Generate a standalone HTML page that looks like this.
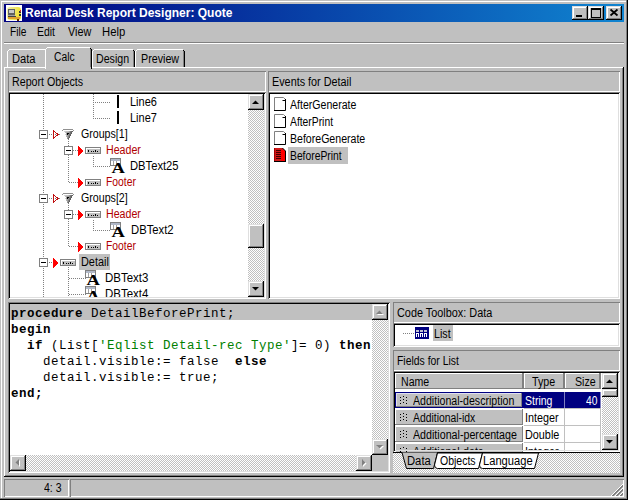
<!DOCTYPE html><html><head><meta charset="utf-8"><style>
html,body{margin:0;padding:0}
body{width:628px;height:500px;position:relative;overflow:hidden;background:#c0c0c0;font-family:"Liberation Sans",sans-serif;font-size:11px;color:#000}
.a{position:absolute}
.t{position:absolute;white-space:pre;line-height:13px;font-size:12px;transform-origin:0 0}
.m{position:absolute;white-space:pre;font-family:"Liberation Mono",monospace;font-size:12.5px;letter-spacing:0.5px;line-height:16px}
.m b{font-weight:bold}
</style></head><body>
<svg width="0" height="0" style="position:absolute"><defs><pattern id="chk" width="2" height="2" patternUnits="userSpaceOnUse"><rect width="2" height="2" fill="#fff"/><rect width="1" height="1" fill="#c0c0c0"/><rect x="1" y="1" width="1" height="1" fill="#c0c0c0"/></pattern></defs></svg>

<div class="a" style="left:1px;top:1px;width:625px;height:1px;background:#fff"></div>
<div class="a" style="left:1px;top:1px;width:1px;height:497px;background:#fff"></div>
<div class="a" style="left:626px;top:0px;width:1px;height:499px;background:#808080"></div>
<div class="a" style="left:0px;top:498px;width:627px;height:1px;background:#808080"></div>
<div class="a" style="left:627px;top:0px;width:1px;height:500px;background:#000"></div>
<div class="a" style="left:0px;top:499px;width:628px;height:1px;background:#000"></div>
<div class="a" style="left:4px;top:4px;width:620px;height:18px;background:linear-gradient(to right,#000080,#1084d0)"></div>
<svg class="a" style="left:6px;top:5px" width="16" height="16">
<defs><linearGradient id="ig" x1="0" y1="0" x2="1" y2="0.3"><stop offset="0" stop-color="#f0f0b0"/><stop offset="1" stop-color="#f0e030"/></linearGradient></defs>
<rect x="0" y="0" width="16" height="16" fill="#fff"/>
<rect x="1" y="2" width="14" height="13" rx="3" fill="url(#ig)"/>
<rect x="2" y="4" width="7" height="6" fill="#606060"/>
<rect x="3" y="5" width="5" height="3" fill="#c8c8c8"/>
<rect x="2" y="10" width="7" height="1" fill="#a0a0a0"/>
<rect x="2" y="11" width="8" height="1" fill="#404040"/>
<rect x="2" y="12" width="12" height="2" fill="#e0a030"/>
<rect x="13" y="6" width="2" height="2" fill="#303030"/>
<rect x="14" y="5" width="1" height="2" fill="#c03030"/>
<rect x="13" y="9" width="2" height="2" fill="#303030"/>
<rect x="11" y="14" width="2" height="2" fill="#602000"/>
</svg>
<div class="t" style="left:25px;top:6px;color:#fff;font-weight:bold;font-size:12px;line-height:14px">Rental Desk Report Designer: Quote</div>
<div class="a" style="left:572px;top:6px;width:16px;height:14px;background:#c0c0c0;box-shadow:inset -1px -1px #000,inset 1px 1px #dfdfdf,inset -2px -2px #808080,inset 2px 2px #fff;"></div>
<div class="a" style="left:588px;top:6px;width:16px;height:14px;background:#c0c0c0;box-shadow:inset -1px -1px #000,inset 1px 1px #dfdfdf,inset -2px -2px #808080,inset 2px 2px #fff;"></div>
<div class="a" style="left:606px;top:6px;width:16px;height:14px;background:#c0c0c0;box-shadow:inset -1px -1px #000,inset 1px 1px #dfdfdf,inset -2px -2px #808080,inset 2px 2px #fff;"></div>
<svg class="a" style="left:0;top:0" width="628" height="40">
<rect x="576" y="15" width="6" height="2" fill="#000"/>
<rect x="591" y="8" width="9" height="9" fill="none" stroke="#000" stroke-width="1" transform="translate(0.5,0.5)"/>
<rect x="591" y="8" width="9" height="2" fill="#000"/>
<path d="M610.5 9.5L617.5 15.5M617.5 9.5L610.5 15.5" stroke="#000" stroke-width="1.7"/>
</svg>
<div class="t" style="left:9.85px;top:26px;transform:scaleX(0.8500);">File</div>
<div class="t" style="left:37.43px;top:26px;transform:scaleX(0.8700);">Edit</div>
<div class="t" style="left:68.00px;top:26px;transform:scaleX(0.9000);">View</div>
<div class="t" style="left:102.26px;top:26px;transform:scaleX(0.9391);">Help</div>
<div class="a" style="left:4px;top:42px;width:620px;height:1px;background:#808080"></div>
<div class="a" style="left:4px;top:43px;width:620px;height:1px;background:#fff"></div>
<div class="a" style="left:4px;top:67px;width:619px;height:1px;background:#fff"></div>
<div class="a" style="left:4px;top:67px;width:1px;height:410px;background:#fff"></div>
<div class="a" style="left:622px;top:68px;width:1px;height:408px;background:#808080"></div>
<div class="a" style="left:623px;top:67px;width:1px;height:410px;background:#000"></div>
<div class="a" style="left:5px;top:475px;width:618px;height:1px;background:#808080"></div>
<div class="a" style="left:4px;top:476px;width:620px;height:1px;background:#000"></div>
<div class="a" style="left:8px;top:50px;width:38px;height:17px;background:#c0c0c0"></div>
<div class="a" style="left:7px;top:51px;width:1px;height:16px;background:#fff"></div>
<div class="a" style="left:8px;top:50px;width:1px;height:1px;background:#fff"></div>
<div class="a" style="left:9px;top:49px;width:36px;height:1px;background:#fff"></div>
<div class="a" style="left:45px;top:51px;width:1px;height:16px;background:#808080"></div>
<div class="a" style="left:46px;top:51px;width:1px;height:16px;background:#000"></div>
<div class="a" style="left:45px;top:50px;width:1px;height:1px;background:#000"></div>
<div class="t" style="left:11.77px;top:53px;transform:scaleX(0.9292);">Data</div>
<div class="a" style="left:93px;top:50px;width:41px;height:17px;background:#c0c0c0"></div>
<div class="a" style="left:92px;top:51px;width:1px;height:16px;background:#fff"></div>
<div class="a" style="left:93px;top:50px;width:1px;height:1px;background:#fff"></div>
<div class="a" style="left:94px;top:49px;width:39px;height:1px;background:#fff"></div>
<div class="a" style="left:133px;top:51px;width:1px;height:16px;background:#808080"></div>
<div class="a" style="left:134px;top:51px;width:1px;height:16px;background:#000"></div>
<div class="a" style="left:133px;top:50px;width:1px;height:1px;background:#000"></div>
<div class="t" style="left:95.91px;top:53px;transform:scaleX(0.8861);">Design</div>
<div class="a" style="left:136px;top:50px;width:48px;height:17px;background:#c0c0c0"></div>
<div class="a" style="left:135px;top:51px;width:1px;height:16px;background:#fff"></div>
<div class="a" style="left:136px;top:50px;width:1px;height:1px;background:#fff"></div>
<div class="a" style="left:137px;top:49px;width:46px;height:1px;background:#fff"></div>
<div class="a" style="left:183px;top:51px;width:1px;height:16px;background:#808080"></div>
<div class="a" style="left:184px;top:51px;width:1px;height:16px;background:#000"></div>
<div class="a" style="left:183px;top:50px;width:1px;height:1px;background:#000"></div>
<div class="t" style="left:140.61px;top:53px;transform:scaleX(0.8929);">Preview</div>
<div class="a" style="left:45px;top:67px;width:47px;height:1px;background:#c0c0c0"></div>
<div class="a" style="left:46px;top:48px;width:45px;height:21px;background:#c0c0c0"></div>
<div class="a" style="left:45px;top:49px;width:1px;height:20px;background:#fff"></div>
<div class="a" style="left:46px;top:48px;width:1px;height:1px;background:#fff"></div>
<div class="a" style="left:47px;top:47px;width:43px;height:1px;background:#fff"></div>
<div class="a" style="left:90px;top:49px;width:1px;height:19px;background:#808080"></div>
<div class="a" style="left:91px;top:49px;width:1px;height:20px;background:#000"></div>
<div class="a" style="left:90px;top:48px;width:1px;height:1px;background:#000"></div>
<div class="t" style="left:54.14px;top:51px;transform:scaleX(0.8609);">Calc</div>
<div class="a" style="left:46px;top:67px;width:45px;height:1px;background:#c0c0c0"></div>
<div class="a" style="left:8px;top:71px;width:258px;height:21px;background:#c0c0c0;box-shadow:inset 1px 1px #808080,inset -1px -1px #fff;"></div>
<div class="t" style="left:11.81px;top:76px;transform:scaleX(0.8886);">Report Objects</div>
<div class="a" style="left:8px;top:92px;width:258px;height:207px;background:#fff;box-shadow:inset 1px 1px #808080,inset -1px -1px #fff,inset 2px 2px #000,inset -2px -2px #dfdfdf;"></div>
<svg class="a" style="left:248px;top:110px" width="16" height="171"><rect width="16" height="171" fill="url(#chk)"/></svg>
<div class="a" style="left:248px;top:94px;width:16px;height:16px;background:#c0c0c0;box-shadow:inset -1px -1px #000,inset 1px 1px #dfdfdf,inset -2px -2px #808080,inset 2px 2px #fff;"></div>
<svg class="a" style="left:0;top:0" width="628" height="500"><path d="M252 104h7l-3.5-3.5z" fill="#000"/></svg>
<div class="a" style="left:248px;top:281px;width:16px;height:16px;background:#c0c0c0;box-shadow:inset -1px -1px #000,inset 1px 1px #dfdfdf,inset -2px -2px #808080,inset 2px 2px #fff;"></div>
<svg class="a" style="left:0;top:0" width="628" height="500"><path d="M252 287h7l-3.5 3.5z" fill="#000"/></svg>
<div class="a" style="left:248px;top:224px;width:16px;height:24px;background:#c0c0c0;box-shadow:inset -1px -1px #000,inset 1px 1px #dfdfdf,inset -2px -2px #808080,inset 2px 2px #fff;"></div>
<svg class="a" style="left:10px;top:94px" width="238" height="203"><g transform="translate(-10,-94)"><rect x="43" y="94" width="1" height="1" fill="#808080"/><rect x="43" y="96" width="1" height="1" fill="#808080"/><rect x="43" y="98" width="1" height="1" fill="#808080"/><rect x="43" y="100" width="1" height="1" fill="#808080"/><rect x="43" y="102" width="1" height="1" fill="#808080"/><rect x="43" y="104" width="1" height="1" fill="#808080"/><rect x="43" y="106" width="1" height="1" fill="#808080"/><rect x="43" y="108" width="1" height="1" fill="#808080"/><rect x="43" y="110" width="1" height="1" fill="#808080"/><rect x="43" y="112" width="1" height="1" fill="#808080"/><rect x="43" y="114" width="1" height="1" fill="#808080"/><rect x="43" y="116" width="1" height="1" fill="#808080"/><rect x="43" y="118" width="1" height="1" fill="#808080"/><rect x="43" y="120" width="1" height="1" fill="#808080"/><rect x="43" y="122" width="1" height="1" fill="#808080"/><rect x="43" y="124" width="1" height="1" fill="#808080"/><rect x="43" y="126" width="1" height="1" fill="#808080"/><rect x="43" y="128" width="1" height="1" fill="#808080"/><rect x="43" y="130" width="1" height="1" fill="#808080"/><rect x="43" y="132" width="1" height="1" fill="#808080"/><rect x="43" y="134" width="1" height="1" fill="#808080"/><rect x="43" y="136" width="1" height="1" fill="#808080"/><rect x="43" y="138" width="1" height="1" fill="#808080"/><rect x="43" y="140" width="1" height="1" fill="#808080"/><rect x="43" y="142" width="1" height="1" fill="#808080"/><rect x="43" y="144" width="1" height="1" fill="#808080"/><rect x="43" y="146" width="1" height="1" fill="#808080"/><rect x="43" y="148" width="1" height="1" fill="#808080"/><rect x="43" y="150" width="1" height="1" fill="#808080"/><rect x="43" y="152" width="1" height="1" fill="#808080"/><rect x="43" y="154" width="1" height="1" fill="#808080"/><rect x="43" y="156" width="1" height="1" fill="#808080"/><rect x="43" y="158" width="1" height="1" fill="#808080"/><rect x="43" y="160" width="1" height="1" fill="#808080"/><rect x="43" y="162" width="1" height="1" fill="#808080"/><rect x="43" y="164" width="1" height="1" fill="#808080"/><rect x="43" y="166" width="1" height="1" fill="#808080"/><rect x="43" y="168" width="1" height="1" fill="#808080"/><rect x="43" y="170" width="1" height="1" fill="#808080"/><rect x="43" y="172" width="1" height="1" fill="#808080"/><rect x="43" y="174" width="1" height="1" fill="#808080"/><rect x="43" y="176" width="1" height="1" fill="#808080"/><rect x="43" y="178" width="1" height="1" fill="#808080"/><rect x="43" y="180" width="1" height="1" fill="#808080"/><rect x="43" y="182" width="1" height="1" fill="#808080"/><rect x="43" y="184" width="1" height="1" fill="#808080"/><rect x="43" y="186" width="1" height="1" fill="#808080"/><rect x="43" y="188" width="1" height="1" fill="#808080"/><rect x="43" y="190" width="1" height="1" fill="#808080"/><rect x="43" y="192" width="1" height="1" fill="#808080"/><rect x="43" y="194" width="1" height="1" fill="#808080"/><rect x="43" y="196" width="1" height="1" fill="#808080"/><rect x="43" y="198" width="1" height="1" fill="#808080"/><rect x="43" y="200" width="1" height="1" fill="#808080"/><rect x="43" y="202" width="1" height="1" fill="#808080"/><rect x="43" y="204" width="1" height="1" fill="#808080"/><rect x="43" y="206" width="1" height="1" fill="#808080"/><rect x="43" y="208" width="1" height="1" fill="#808080"/><rect x="43" y="210" width="1" height="1" fill="#808080"/><rect x="43" y="212" width="1" height="1" fill="#808080"/><rect x="43" y="214" width="1" height="1" fill="#808080"/><rect x="43" y="216" width="1" height="1" fill="#808080"/><rect x="43" y="218" width="1" height="1" fill="#808080"/><rect x="43" y="220" width="1" height="1" fill="#808080"/><rect x="43" y="222" width="1" height="1" fill="#808080"/><rect x="43" y="224" width="1" height="1" fill="#808080"/><rect x="43" y="226" width="1" height="1" fill="#808080"/><rect x="43" y="228" width="1" height="1" fill="#808080"/><rect x="43" y="230" width="1" height="1" fill="#808080"/><rect x="43" y="232" width="1" height="1" fill="#808080"/><rect x="43" y="234" width="1" height="1" fill="#808080"/><rect x="43" y="236" width="1" height="1" fill="#808080"/><rect x="43" y="238" width="1" height="1" fill="#808080"/><rect x="43" y="240" width="1" height="1" fill="#808080"/><rect x="43" y="242" width="1" height="1" fill="#808080"/><rect x="43" y="244" width="1" height="1" fill="#808080"/><rect x="43" y="246" width="1" height="1" fill="#808080"/><rect x="43" y="248" width="1" height="1" fill="#808080"/><rect x="43" y="250" width="1" height="1" fill="#808080"/><rect x="43" y="252" width="1" height="1" fill="#808080"/><rect x="43" y="254" width="1" height="1" fill="#808080"/><rect x="43" y="256" width="1" height="1" fill="#808080"/><rect x="43" y="258" width="1" height="1" fill="#808080"/><rect x="43" y="260" width="1" height="1" fill="#808080"/><rect x="43" y="262" width="1" height="1" fill="#808080"/><rect x="43" y="264" width="1" height="1" fill="#808080"/><rect x="43" y="266" width="1" height="1" fill="#808080"/><rect x="43" y="268" width="1" height="1" fill="#808080"/><rect x="43" y="270" width="1" height="1" fill="#808080"/><rect x="43" y="272" width="1" height="1" fill="#808080"/><rect x="43" y="274" width="1" height="1" fill="#808080"/><rect x="43" y="276" width="1" height="1" fill="#808080"/><rect x="43" y="278" width="1" height="1" fill="#808080"/><rect x="43" y="280" width="1" height="1" fill="#808080"/><rect x="43" y="282" width="1" height="1" fill="#808080"/><rect x="43" y="284" width="1" height="1" fill="#808080"/><rect x="43" y="286" width="1" height="1" fill="#808080"/><rect x="43" y="288" width="1" height="1" fill="#808080"/><rect x="43" y="290" width="1" height="1" fill="#808080"/><rect x="43" y="292" width="1" height="1" fill="#808080"/><rect x="43" y="294" width="1" height="1" fill="#808080"/><rect x="43" y="296" width="1" height="1" fill="#808080"/><rect x="93" y="94" width="1" height="1" fill="#808080"/><rect x="93" y="96" width="1" height="1" fill="#808080"/><rect x="93" y="98" width="1" height="1" fill="#808080"/><rect x="93" y="100" width="1" height="1" fill="#808080"/><rect x="93" y="102" width="1" height="1" fill="#808080"/><rect x="93" y="104" width="1" height="1" fill="#808080"/><rect x="93" y="106" width="1" height="1" fill="#808080"/><rect x="93" y="108" width="1" height="1" fill="#808080"/><rect x="93" y="110" width="1" height="1" fill="#808080"/><rect x="93" y="112" width="1" height="1" fill="#808080"/><rect x="93" y="114" width="1" height="1" fill="#808080"/><rect x="93" y="116" width="1" height="1" fill="#808080"/><rect x="93" y="118" width="1" height="1" fill="#808080"/><rect x="93" y="102" width="1" height="1" fill="#808080"/><rect x="95" y="102" width="1" height="1" fill="#808080"/><rect x="97" y="102" width="1" height="1" fill="#808080"/><rect x="99" y="102" width="1" height="1" fill="#808080"/><rect x="101" y="102" width="1" height="1" fill="#808080"/><rect x="103" y="102" width="1" height="1" fill="#808080"/><rect x="105" y="102" width="1" height="1" fill="#808080"/><rect x="107" y="102" width="1" height="1" fill="#808080"/><rect x="109" y="102" width="1" height="1" fill="#808080"/><rect x="93" y="118" width="1" height="1" fill="#808080"/><rect x="95" y="118" width="1" height="1" fill="#808080"/><rect x="97" y="118" width="1" height="1" fill="#808080"/><rect x="99" y="118" width="1" height="1" fill="#808080"/><rect x="101" y="118" width="1" height="1" fill="#808080"/><rect x="103" y="118" width="1" height="1" fill="#808080"/><rect x="105" y="118" width="1" height="1" fill="#808080"/><rect x="107" y="118" width="1" height="1" fill="#808080"/><rect x="109" y="118" width="1" height="1" fill="#808080"/><rect x="117" y="95" width="2" height="13" fill="#000"/><rect x="117" y="111" width="2" height="13" fill="#000"/><rect x="39.5" y="130.5" width="8" height="8" fill="#fff" stroke="#808080"/><rect x="41" y="134" width="5" height="1" fill="#000"/><rect x="49" y="134" width="1" height="1" fill="#808080"/><rect x="51" y="134" width="1" height="1" fill="#808080"/><rect x="53" y="134" width="1" height="1" fill="#808080"/><rect x="55" y="134" width="1" height="1" fill="#808080"/><rect x="57" y="134" width="1" height="1" fill="#808080"/><rect x="59" y="134" width="1" height="1" fill="#808080"/><rect x="53" y="130" width="1" height="1" fill="#c01010"/><rect x="54" y="131" width="1" height="1" fill="#c01010"/><rect x="55" y="132" width="1" height="1" fill="#c01010"/><rect x="56" y="133" width="2" height="1" fill="#c01010"/><rect x="57" y="134" width="2" height="1" fill="#c01010"/><rect x="56" y="135" width="2" height="1" fill="#c01010"/><rect x="55" y="136" width="1" height="1" fill="#c01010"/><rect x="54" y="137" width="1" height="1" fill="#c01010"/><rect x="53" y="138" width="1" height="1" fill="#c01010"/><rect x="53" y="130" width="1" height="9" fill="#c01010"/><rect x="63" y="129" width="10" height="1" fill="#909090"/><rect x="62" y="130" width="1" height="1" fill="#909090"/><rect x="73" y="130" width="1" height="1" fill="#909090"/><rect x="64" y="131" width="1" height="1" fill="#d0d0d0"/><rect x="65" y="131" width="1" height="1" fill="#c8c8c8"/><rect x="66" y="131" width="1" height="1" fill="#c0c0c0"/><rect x="67" y="131" width="1" height="1" fill="#c0c0c0"/><rect x="68" y="131" width="1" height="1" fill="#b8b8b8"/><rect x="69" y="131" width="1" height="1" fill="#a0a0a0"/><rect x="70" y="131" width="1" height="1" fill="#808080"/><rect x="71" y="131" width="1" height="1" fill="#707070"/><rect x="72" y="131" width="1" height="1" fill="#606060"/><rect x="64" y="132" width="1" height="1" fill="#ffffff"/><rect x="65" y="132" width="1" height="1" fill="#c0c0c0"/><rect x="66" y="132" width="1" height="1" fill="#b0b0b0"/><rect x="67" y="132" width="1" height="1" fill="#a0a0a0"/><rect x="68" y="132" width="1" height="1" fill="#a0a0a0"/><rect x="69" y="132" width="1" height="1" fill="#909090"/><rect x="70" y="132" width="1" height="1" fill="#707070"/><rect x="71" y="132" width="1" height="1" fill="#606060"/><rect x="65" y="133" width="1" height="1" fill="#ffffff"/><rect x="66" y="133" width="1" height="1" fill="#a0a0a0"/><rect x="67" y="133" width="1" height="1" fill="#000000"/><rect x="68" y="133" width="1" height="1" fill="#000000"/><rect x="69" y="133" width="1" height="1" fill="#808080"/><rect x="70" y="133" width="1" height="1" fill="#707070"/><rect x="71" y="133" width="1" height="1" fill="#606060"/><rect x="65" y="134" width="1" height="1" fill="#d0d0d0"/><rect x="66" y="134" width="1" height="1" fill="#a0a0a0"/><rect x="67" y="134" width="1" height="1" fill="#000000"/><rect x="68" y="134" width="1" height="1" fill="#909090"/><rect x="69" y="134" width="1" height="1" fill="#707070"/><rect x="70" y="134" width="1" height="1" fill="#606060"/><rect x="66" y="135" width="1" height="1" fill="#c0c0c0"/><rect x="67" y="135" width="1" height="1" fill="#a0a0a0"/><rect x="68" y="135" width="1" height="1" fill="#909090"/><rect x="69" y="135" width="1" height="1" fill="#707070"/><rect x="70" y="135" width="1" height="1" fill="#606060"/><rect x="66" y="136" width="1" height="1" fill="#b0b0b0"/><rect x="67" y="136" width="1" height="1" fill="#a0a0a0"/><rect x="68" y="136" width="1" height="1" fill="#808080"/><rect x="69" y="136" width="1" height="1" fill="#606060"/><rect x="67" y="137" width="1" height="1" fill="#a0a0a0"/><rect x="68" y="137" width="1" height="1" fill="#808080"/><rect x="69" y="137" width="1" height="1" fill="#606060"/><rect x="67" y="138" width="1" height="1" fill="#909090"/><rect x="68" y="138" width="1" height="1" fill="#606060"/><rect x="68" y="139" width="1" height="1" fill="#808080"/><rect x="68" y="141" width="1" height="1" fill="#808080"/><rect x="68" y="143" width="1" height="1" fill="#808080"/><rect x="68" y="145" width="1" height="1" fill="#808080"/><rect x="68" y="147" width="1" height="1" fill="#808080"/><rect x="68" y="149" width="1" height="1" fill="#808080"/><rect x="68" y="151" width="1" height="1" fill="#808080"/><rect x="68" y="153" width="1" height="1" fill="#808080"/><rect x="68" y="155" width="1" height="1" fill="#808080"/><rect x="68" y="157" width="1" height="1" fill="#808080"/><rect x="68" y="159" width="1" height="1" fill="#808080"/><rect x="68" y="161" width="1" height="1" fill="#808080"/><rect x="68" y="163" width="1" height="1" fill="#808080"/><rect x="68" y="165" width="1" height="1" fill="#808080"/><rect x="68" y="167" width="1" height="1" fill="#808080"/><rect x="68" y="169" width="1" height="1" fill="#808080"/><rect x="68" y="171" width="1" height="1" fill="#808080"/><rect x="68" y="173" width="1" height="1" fill="#808080"/><rect x="68" y="175" width="1" height="1" fill="#808080"/><rect x="68" y="177" width="1" height="1" fill="#808080"/><rect x="68" y="179" width="1" height="1" fill="#808080"/><rect x="68" y="181" width="1" height="1" fill="#808080"/><rect x="64.5" y="146.5" width="8" height="8" fill="#fff" stroke="#808080"/><rect x="66" y="150" width="5" height="1" fill="#000"/><rect x="73" y="150" width="1" height="1" fill="#808080"/><rect x="75" y="150" width="1" height="1" fill="#808080"/><rect x="77" y="150" width="1" height="1" fill="#808080"/><rect x="78" y="146" width="1" height="1" fill="#ff0000"/><rect x="78" y="147" width="2" height="1" fill="#ff0000"/><rect x="78" y="148" width="3" height="1" fill="#ff0000"/><rect x="78" y="149" width="4" height="1" fill="#ff0000"/><rect x="78" y="150" width="5" height="1" fill="#ff0000"/><rect x="78" y="151" width="5" height="1" fill="#ff0000"/><rect x="78" y="152" width="4" height="1" fill="#ff0000"/><rect x="78" y="153" width="3" height="1" fill="#ff0000"/><rect x="78" y="154" width="2" height="1" fill="#ff0000"/><rect x="78" y="155" width="1" height="1" fill="#ff0000"/><rect x="85.5" y="147.5" width="15" height="6" fill="#c0c0c0" stroke="#808080"/><rect x="86" y="148" width="14" height="1" fill="#fff"/><rect x="86" y="148" width="1" height="5" fill="#fff"/><rect x="88" y="150" width="1" height="2" fill="#000"/><rect x="91" y="151" width="1" height="1" fill="#000"/><rect x="93" y="151" width="1" height="1" fill="#000"/><rect x="95" y="150" width="1" height="2" fill="#000"/><rect x="97" y="151" width="1" height="1" fill="#000"/><rect x="93" y="156" width="1" height="1" fill="#808080"/><rect x="93" y="158" width="1" height="1" fill="#808080"/><rect x="93" y="160" width="1" height="1" fill="#808080"/><rect x="93" y="162" width="1" height="1" fill="#808080"/><rect x="93" y="164" width="1" height="1" fill="#808080"/><rect x="93" y="166" width="1" height="1" fill="#808080"/><rect x="93" y="166" width="1" height="1" fill="#808080"/><rect x="95" y="166" width="1" height="1" fill="#808080"/><rect x="97" y="166" width="1" height="1" fill="#808080"/><rect x="99" y="166" width="1" height="1" fill="#808080"/><rect x="101" y="166" width="1" height="1" fill="#808080"/><rect x="103" y="166" width="1" height="1" fill="#808080"/><rect x="105" y="166" width="1" height="1" fill="#808080"/><rect x="107" y="166" width="1" height="1" fill="#808080"/><rect x="109" y="166" width="1" height="1" fill="#808080"/><rect x="110.5" y="158.5" width="10" height="7" fill="#fff" stroke="#808080"/><rect x="111" y="159" width="9" height="2" fill="#b0b8c8"/><rect x="113" y="161" width="1" height="4" fill="#a0a0a0"/><rect x="116" y="161" width="1" height="4" fill="#a0a0a0"/><text x="0" y="0" transform="translate(111.6,173.2) scale(1.2,1)" font-family="Liberation Serif" font-weight="bold" font-size="15.5" fill="#000">A</text><rect x="69" y="182" width="1" height="1" fill="#808080"/><rect x="71" y="182" width="1" height="1" fill="#808080"/><rect x="73" y="182" width="1" height="1" fill="#808080"/><rect x="75" y="182" width="1" height="1" fill="#808080"/><rect x="77" y="182" width="1" height="1" fill="#808080"/><rect x="78" y="178" width="1" height="1" fill="#ff0000"/><rect x="78" y="179" width="2" height="1" fill="#ff0000"/><rect x="78" y="180" width="3" height="1" fill="#ff0000"/><rect x="78" y="181" width="4" height="1" fill="#ff0000"/><rect x="78" y="182" width="5" height="1" fill="#ff0000"/><rect x="78" y="183" width="5" height="1" fill="#ff0000"/><rect x="78" y="184" width="4" height="1" fill="#ff0000"/><rect x="78" y="185" width="3" height="1" fill="#ff0000"/><rect x="78" y="186" width="2" height="1" fill="#ff0000"/><rect x="78" y="187" width="1" height="1" fill="#ff0000"/><rect x="85.5" y="179.5" width="15" height="6" fill="#c0c0c0" stroke="#808080"/><rect x="86" y="180" width="14" height="1" fill="#fff"/><rect x="86" y="180" width="1" height="5" fill="#fff"/><rect x="88" y="182" width="1" height="2" fill="#000"/><rect x="91" y="183" width="1" height="1" fill="#000"/><rect x="93" y="183" width="1" height="1" fill="#000"/><rect x="95" y="182" width="1" height="2" fill="#000"/><rect x="97" y="183" width="1" height="1" fill="#000"/><rect x="39.5" y="194.5" width="8" height="8" fill="#fff" stroke="#808080"/><rect x="41" y="198" width="5" height="1" fill="#000"/><rect x="49" y="198" width="1" height="1" fill="#808080"/><rect x="51" y="198" width="1" height="1" fill="#808080"/><rect x="53" y="198" width="1" height="1" fill="#808080"/><rect x="55" y="198" width="1" height="1" fill="#808080"/><rect x="57" y="198" width="1" height="1" fill="#808080"/><rect x="59" y="198" width="1" height="1" fill="#808080"/><rect x="53" y="194" width="1" height="1" fill="#c01010"/><rect x="54" y="195" width="1" height="1" fill="#c01010"/><rect x="55" y="196" width="1" height="1" fill="#c01010"/><rect x="56" y="197" width="2" height="1" fill="#c01010"/><rect x="57" y="198" width="2" height="1" fill="#c01010"/><rect x="56" y="199" width="2" height="1" fill="#c01010"/><rect x="55" y="200" width="1" height="1" fill="#c01010"/><rect x="54" y="201" width="1" height="1" fill="#c01010"/><rect x="53" y="202" width="1" height="1" fill="#c01010"/><rect x="53" y="194" width="1" height="9" fill="#c01010"/><rect x="63" y="193" width="10" height="1" fill="#909090"/><rect x="62" y="194" width="1" height="1" fill="#909090"/><rect x="73" y="194" width="1" height="1" fill="#909090"/><rect x="64" y="195" width="1" height="1" fill="#d0d0d0"/><rect x="65" y="195" width="1" height="1" fill="#c8c8c8"/><rect x="66" y="195" width="1" height="1" fill="#c0c0c0"/><rect x="67" y="195" width="1" height="1" fill="#c0c0c0"/><rect x="68" y="195" width="1" height="1" fill="#b8b8b8"/><rect x="69" y="195" width="1" height="1" fill="#a0a0a0"/><rect x="70" y="195" width="1" height="1" fill="#808080"/><rect x="71" y="195" width="1" height="1" fill="#707070"/><rect x="72" y="195" width="1" height="1" fill="#606060"/><rect x="64" y="196" width="1" height="1" fill="#ffffff"/><rect x="65" y="196" width="1" height="1" fill="#c0c0c0"/><rect x="66" y="196" width="1" height="1" fill="#b0b0b0"/><rect x="67" y="196" width="1" height="1" fill="#a0a0a0"/><rect x="68" y="196" width="1" height="1" fill="#a0a0a0"/><rect x="69" y="196" width="1" height="1" fill="#909090"/><rect x="70" y="196" width="1" height="1" fill="#707070"/><rect x="71" y="196" width="1" height="1" fill="#606060"/><rect x="65" y="197" width="1" height="1" fill="#ffffff"/><rect x="66" y="197" width="1" height="1" fill="#a0a0a0"/><rect x="67" y="197" width="1" height="1" fill="#000000"/><rect x="68" y="197" width="1" height="1" fill="#000000"/><rect x="69" y="197" width="1" height="1" fill="#808080"/><rect x="70" y="197" width="1" height="1" fill="#707070"/><rect x="71" y="197" width="1" height="1" fill="#606060"/><rect x="65" y="198" width="1" height="1" fill="#d0d0d0"/><rect x="66" y="198" width="1" height="1" fill="#a0a0a0"/><rect x="67" y="198" width="1" height="1" fill="#000000"/><rect x="68" y="198" width="1" height="1" fill="#909090"/><rect x="69" y="198" width="1" height="1" fill="#707070"/><rect x="70" y="198" width="1" height="1" fill="#606060"/><rect x="66" y="199" width="1" height="1" fill="#c0c0c0"/><rect x="67" y="199" width="1" height="1" fill="#a0a0a0"/><rect x="68" y="199" width="1" height="1" fill="#909090"/><rect x="69" y="199" width="1" height="1" fill="#707070"/><rect x="70" y="199" width="1" height="1" fill="#606060"/><rect x="66" y="200" width="1" height="1" fill="#b0b0b0"/><rect x="67" y="200" width="1" height="1" fill="#a0a0a0"/><rect x="68" y="200" width="1" height="1" fill="#808080"/><rect x="69" y="200" width="1" height="1" fill="#606060"/><rect x="67" y="201" width="1" height="1" fill="#a0a0a0"/><rect x="68" y="201" width="1" height="1" fill="#808080"/><rect x="69" y="201" width="1" height="1" fill="#606060"/><rect x="67" y="202" width="1" height="1" fill="#909090"/><rect x="68" y="202" width="1" height="1" fill="#606060"/><rect x="68" y="203" width="1" height="1" fill="#808080"/><rect x="68" y="205" width="1" height="1" fill="#808080"/><rect x="68" y="207" width="1" height="1" fill="#808080"/><rect x="68" y="209" width="1" height="1" fill="#808080"/><rect x="68" y="211" width="1" height="1" fill="#808080"/><rect x="68" y="213" width="1" height="1" fill="#808080"/><rect x="68" y="215" width="1" height="1" fill="#808080"/><rect x="68" y="217" width="1" height="1" fill="#808080"/><rect x="68" y="219" width="1" height="1" fill="#808080"/><rect x="68" y="221" width="1" height="1" fill="#808080"/><rect x="68" y="223" width="1" height="1" fill="#808080"/><rect x="68" y="225" width="1" height="1" fill="#808080"/><rect x="68" y="227" width="1" height="1" fill="#808080"/><rect x="68" y="229" width="1" height="1" fill="#808080"/><rect x="68" y="231" width="1" height="1" fill="#808080"/><rect x="68" y="233" width="1" height="1" fill="#808080"/><rect x="68" y="235" width="1" height="1" fill="#808080"/><rect x="68" y="237" width="1" height="1" fill="#808080"/><rect x="68" y="239" width="1" height="1" fill="#808080"/><rect x="68" y="241" width="1" height="1" fill="#808080"/><rect x="68" y="243" width="1" height="1" fill="#808080"/><rect x="68" y="245" width="1" height="1" fill="#808080"/><rect x="64.5" y="210.5" width="8" height="8" fill="#fff" stroke="#808080"/><rect x="66" y="214" width="5" height="1" fill="#000"/><rect x="73" y="214" width="1" height="1" fill="#808080"/><rect x="75" y="214" width="1" height="1" fill="#808080"/><rect x="77" y="214" width="1" height="1" fill="#808080"/><rect x="78" y="210" width="1" height="1" fill="#ff0000"/><rect x="78" y="211" width="2" height="1" fill="#ff0000"/><rect x="78" y="212" width="3" height="1" fill="#ff0000"/><rect x="78" y="213" width="4" height="1" fill="#ff0000"/><rect x="78" y="214" width="5" height="1" fill="#ff0000"/><rect x="78" y="215" width="5" height="1" fill="#ff0000"/><rect x="78" y="216" width="4" height="1" fill="#ff0000"/><rect x="78" y="217" width="3" height="1" fill="#ff0000"/><rect x="78" y="218" width="2" height="1" fill="#ff0000"/><rect x="78" y="219" width="1" height="1" fill="#ff0000"/><rect x="85.5" y="211.5" width="15" height="6" fill="#c0c0c0" stroke="#808080"/><rect x="86" y="212" width="14" height="1" fill="#fff"/><rect x="86" y="212" width="1" height="5" fill="#fff"/><rect x="88" y="214" width="1" height="2" fill="#000"/><rect x="91" y="215" width="1" height="1" fill="#000"/><rect x="93" y="215" width="1" height="1" fill="#000"/><rect x="95" y="214" width="1" height="2" fill="#000"/><rect x="97" y="215" width="1" height="1" fill="#000"/><rect x="93" y="220" width="1" height="1" fill="#808080"/><rect x="93" y="222" width="1" height="1" fill="#808080"/><rect x="93" y="224" width="1" height="1" fill="#808080"/><rect x="93" y="226" width="1" height="1" fill="#808080"/><rect x="93" y="228" width="1" height="1" fill="#808080"/><rect x="93" y="230" width="1" height="1" fill="#808080"/><rect x="93" y="230" width="1" height="1" fill="#808080"/><rect x="95" y="230" width="1" height="1" fill="#808080"/><rect x="97" y="230" width="1" height="1" fill="#808080"/><rect x="99" y="230" width="1" height="1" fill="#808080"/><rect x="101" y="230" width="1" height="1" fill="#808080"/><rect x="103" y="230" width="1" height="1" fill="#808080"/><rect x="105" y="230" width="1" height="1" fill="#808080"/><rect x="107" y="230" width="1" height="1" fill="#808080"/><rect x="109" y="230" width="1" height="1" fill="#808080"/><rect x="110.5" y="222.5" width="10" height="7" fill="#fff" stroke="#808080"/><rect x="111" y="223" width="9" height="2" fill="#b0b8c8"/><rect x="113" y="225" width="1" height="4" fill="#a0a0a0"/><rect x="116" y="225" width="1" height="4" fill="#a0a0a0"/><text x="0" y="0" transform="translate(111.6,237.2) scale(1.2,1)" font-family="Liberation Serif" font-weight="bold" font-size="15.5" fill="#000">A</text><rect x="69" y="246" width="1" height="1" fill="#808080"/><rect x="71" y="246" width="1" height="1" fill="#808080"/><rect x="73" y="246" width="1" height="1" fill="#808080"/><rect x="75" y="246" width="1" height="1" fill="#808080"/><rect x="77" y="246" width="1" height="1" fill="#808080"/><rect x="78" y="242" width="1" height="1" fill="#ff0000"/><rect x="78" y="243" width="2" height="1" fill="#ff0000"/><rect x="78" y="244" width="3" height="1" fill="#ff0000"/><rect x="78" y="245" width="4" height="1" fill="#ff0000"/><rect x="78" y="246" width="5" height="1" fill="#ff0000"/><rect x="78" y="247" width="5" height="1" fill="#ff0000"/><rect x="78" y="248" width="4" height="1" fill="#ff0000"/><rect x="78" y="249" width="3" height="1" fill="#ff0000"/><rect x="78" y="250" width="2" height="1" fill="#ff0000"/><rect x="78" y="251" width="1" height="1" fill="#ff0000"/><rect x="85.5" y="243.5" width="15" height="6" fill="#c0c0c0" stroke="#808080"/><rect x="86" y="244" width="14" height="1" fill="#fff"/><rect x="86" y="244" width="1" height="5" fill="#fff"/><rect x="88" y="246" width="1" height="2" fill="#000"/><rect x="91" y="247" width="1" height="1" fill="#000"/><rect x="93" y="247" width="1" height="1" fill="#000"/><rect x="95" y="246" width="1" height="2" fill="#000"/><rect x="97" y="247" width="1" height="1" fill="#000"/><rect x="39.5" y="258.5" width="8" height="8" fill="#fff" stroke="#808080"/><rect x="41" y="262" width="5" height="1" fill="#000"/><rect x="49" y="262" width="1" height="1" fill="#808080"/><rect x="51" y="262" width="1" height="1" fill="#808080"/><rect x="53" y="258" width="1" height="1" fill="#ff0000"/><rect x="53" y="259" width="2" height="1" fill="#ff0000"/><rect x="53" y="260" width="3" height="1" fill="#ff0000"/><rect x="53" y="261" width="4" height="1" fill="#ff0000"/><rect x="53" y="262" width="5" height="1" fill="#ff0000"/><rect x="53" y="263" width="5" height="1" fill="#ff0000"/><rect x="53" y="264" width="4" height="1" fill="#ff0000"/><rect x="53" y="265" width="3" height="1" fill="#ff0000"/><rect x="53" y="266" width="2" height="1" fill="#ff0000"/><rect x="53" y="267" width="1" height="1" fill="#ff0000"/><rect x="60.5" y="259.5" width="15" height="6" fill="#c0c0c0" stroke="#808080"/><rect x="61" y="260" width="14" height="1" fill="#fff"/><rect x="61" y="260" width="1" height="5" fill="#fff"/><rect x="63" y="262" width="1" height="2" fill="#000"/><rect x="66" y="263" width="1" height="1" fill="#000"/><rect x="68" y="263" width="1" height="1" fill="#000"/><rect x="70" y="262" width="1" height="2" fill="#000"/><rect x="72" y="263" width="1" height="1" fill="#000"/><rect x="68" y="267" width="1" height="1" fill="#808080"/><rect x="68" y="269" width="1" height="1" fill="#808080"/><rect x="68" y="271" width="1" height="1" fill="#808080"/><rect x="68" y="273" width="1" height="1" fill="#808080"/><rect x="68" y="275" width="1" height="1" fill="#808080"/><rect x="68" y="277" width="1" height="1" fill="#808080"/><rect x="68" y="279" width="1" height="1" fill="#808080"/><rect x="68" y="281" width="1" height="1" fill="#808080"/><rect x="68" y="283" width="1" height="1" fill="#808080"/><rect x="68" y="285" width="1" height="1" fill="#808080"/><rect x="68" y="287" width="1" height="1" fill="#808080"/><rect x="68" y="289" width="1" height="1" fill="#808080"/><rect x="68" y="291" width="1" height="1" fill="#808080"/><rect x="68" y="293" width="1" height="1" fill="#808080"/><rect x="68" y="295" width="1" height="1" fill="#808080"/><rect x="69" y="278" width="1" height="1" fill="#808080"/><rect x="71" y="278" width="1" height="1" fill="#808080"/><rect x="73" y="278" width="1" height="1" fill="#808080"/><rect x="75" y="278" width="1" height="1" fill="#808080"/><rect x="77" y="278" width="1" height="1" fill="#808080"/><rect x="79" y="278" width="1" height="1" fill="#808080"/><rect x="81" y="278" width="1" height="1" fill="#808080"/><rect x="83" y="278" width="1" height="1" fill="#808080"/><rect x="85" y="278" width="1" height="1" fill="#808080"/><rect x="85.5" y="270.5" width="10" height="7" fill="#fff" stroke="#808080"/><rect x="86" y="271" width="9" height="2" fill="#b0b8c8"/><rect x="88" y="273" width="1" height="4" fill="#a0a0a0"/><rect x="91" y="273" width="1" height="4" fill="#a0a0a0"/><text x="0" y="0" transform="translate(86.6,285.2) scale(1.2,1)" font-family="Liberation Serif" font-weight="bold" font-size="15.5" fill="#000">A</text><rect x="69" y="294" width="1" height="1" fill="#808080"/><rect x="71" y="294" width="1" height="1" fill="#808080"/><rect x="73" y="294" width="1" height="1" fill="#808080"/><rect x="75" y="294" width="1" height="1" fill="#808080"/><rect x="77" y="294" width="1" height="1" fill="#808080"/><rect x="79" y="294" width="1" height="1" fill="#808080"/><rect x="81" y="294" width="1" height="1" fill="#808080"/><rect x="83" y="294" width="1" height="1" fill="#808080"/><rect x="85" y="294" width="1" height="1" fill="#808080"/><rect x="85.5" y="286.5" width="10" height="7" fill="#fff" stroke="#808080"/><rect x="86" y="287" width="9" height="2" fill="#b0b8c8"/><rect x="88" y="289" width="1" height="4" fill="#a0a0a0"/><rect x="91" y="289" width="1" height="4" fill="#a0a0a0"/><text x="0" y="0" transform="translate(86.6,301.2) scale(1.2,1)" font-family="Liberation Serif" font-weight="bold" font-size="15.5" fill="#000">A</text></g></svg>
<div class="a" style="left:79px;top:254px;width:31px;height:16px;background:#c0c0c0"></div>
<div class="a" style="left:10px;top:94px;width:238px;height:203px;overflow:hidden"><div class="t" style="left:120.49px;top:2px;transform:scaleX(0.9143);color:#000">Line6</div><div class="t" style="left:120.49px;top:18px;transform:scaleX(0.9143);color:#000">Line7</div><div class="t" style="left:71.12px;top:34px;transform:scaleX(0.8843);color:#000">Groups[1]</div><div class="t" style="left:96.01px;top:50px;transform:scaleX(0.8868);color:#b00000">Header</div><div class="t" style="left:120.47px;top:66px;transform:scaleX(0.9333);color:#000">DBText25</div><div class="t" style="left:95.54px;top:82px;transform:scaleX(0.8618);color:#b00000">Footer</div><div class="t" style="left:71.11px;top:98px;transform:scaleX(0.8863);color:#000">Groups[2]</div><div class="t" style="left:96.01px;top:114px;transform:scaleX(0.8868);color:#b00000">Header</div><div class="t" style="left:120.76px;top:130px;transform:scaleX(0.9386);color:#000">DBText2</div><div class="t" style="left:95.54px;top:146px;transform:scaleX(0.8618);color:#b00000">Footer</div><div class="t" style="left:71.29px;top:162px;transform:scaleX(0.9069);color:#000">Detail</div><div class="t" style="left:95.44px;top:178px;transform:scaleX(0.9568);color:#000">DBText3</div><div class="t" style="left:95.44px;top:194px;transform:scaleX(0.9568);color:#000">DBText4</div></div>
<div class="a" style="left:268px;top:71px;width:352px;height:21px;background:#c0c0c0;box-shadow:inset 1px 1px #808080,inset -1px -1px #fff;"></div>
<div class="t" style="left:271.60px;top:76px;transform:scaleX(0.9012);">Events for Detail</div>
<div class="a" style="left:268px;top:92px;width:352px;height:207px;background:#fff;box-shadow:inset 1px 1px #808080,inset -1px -1px #fff,inset 2px 2px #000,inset -2px -2px #dfdfdf;"></div>
<svg class="a" style="left:0;top:0" width="628" height="300"><path d="M274.5 110.5V97.5H283.5L285.5 99.5" fill="none" stroke="#808080"/><path d="M285.5 99V110.5H274" fill="none" stroke="#000"/><path d="M282.5 100.5H285" fill="none" stroke="#000"/><path d="M274.5 127.5V114.5H283.5L285.5 116.5" fill="none" stroke="#808080"/><path d="M285.5 116V127.5H274" fill="none" stroke="#000"/><path d="M282.5 117.5H285" fill="none" stroke="#000"/><path d="M274.5 144.5V131.5H283.5L285.5 133.5" fill="none" stroke="#808080"/><path d="M285.5 133V144.5H274" fill="none" stroke="#000"/><path d="M282.5 134.5H285" fill="none" stroke="#000"/><rect x="274" y="148" width="11" height="13" fill="#d01818"/><rect x="274" y="148" width="1" height="13" fill="#a00000"/><rect x="281" y="150" width="4" height="11" fill="#ff0000"/><rect x="285" y="150" width="1" height="12" fill="#000"/><rect x="274" y="161" width="12" height="1" fill="#000"/><rect x="276" y="150" width="5" height="1" fill="#400000"/><rect x="276" y="152" width="5" height="1" fill="#400000"/><rect x="276" y="154" width="5" height="1" fill="#400000"/><rect x="276" y="156" width="5" height="1" fill="#400000"/><rect x="276" y="158" width="5" height="1" fill="#400000"/><path d="M282 148L286 152V150H285V149H284V148Z" fill="#000"/><path d="M283 148h3v3z" fill="#fff"/></svg>
<div class="a" style="left:288px;top:147px;width:60px;height:17px;background:#c0c0c0"></div>
<div class="t" style="left:290.00px;top:99px;transform:scaleX(0.8800);">AfterGenerate</div>
<div class="t" style="left:290.00px;top:116px;transform:scaleX(0.8600);">AfterPrint</div>
<div class="t" style="left:290.12px;top:133px;transform:scaleX(0.8810);">BeforeGenerate</div>
<div class="t" style="left:290.14px;top:150px;transform:scaleX(0.8593);">BeforePrint</div>
<div class="a" style="left:8px;top:302px;width:382px;height:171px;background:#fff;box-shadow:inset 1px 1px #808080,inset -1px -1px #fff,inset 2px 2px #000,inset -2px -2px #dfdfdf;"></div>
<div class="a" style="left:10px;top:304px;width:362px;height:16px;background:#c0c0c0"></div>
<div class="a" style="left:10px;top:304px;width:362px;height:151px;overflow:hidden"><div class="m" style="left:1px;top:2px"><b>procedure</b> DetailBeforePrint;</div><div class="m" style="left:1px;top:18px"><b>begin</b></div><div class="m" style="left:1px;top:34px">  <b>if</b> (List[<span style="color:#008000">'Eqlist Detail-rec Type'</span>]= 0) <b>then</b></div><div class="m" style="left:1px;top:50px">    detail.visible:= false  <b>else</b></div><div class="m" style="left:1px;top:66px">    detail.visible:= true;</div><div class="m" style="left:1px;top:82px"><b>end;</b></div></div>
<svg class="a" style="left:372px;top:320px" width="16" height="135"><rect width="16" height="135" fill="url(#chk)"/></svg>
<div class="a" style="left:372px;top:304px;width:16px;height:16px;background:#c0c0c0;box-shadow:inset -1px -1px #000,inset 1px 1px #dfdfdf,inset -2px -2px #808080,inset 2px 2px #fff;"></div>
<svg class="a" style="left:0;top:0" width="628" height="500"><path d="M376 314h7l-3.5-3.5z" fill="#fff" transform="translate(1,1)"/><path d="M376 314h7l-3.5-3.5z" fill="#808080"/></svg>
<div class="a" style="left:372px;top:439px;width:16px;height:16px;background:#c0c0c0;box-shadow:inset -1px -1px #000,inset 1px 1px #dfdfdf,inset -2px -2px #808080,inset 2px 2px #fff;"></div>
<svg class="a" style="left:0;top:0" width="628" height="500"><path d="M376 445h7l-3.5 3.5z" fill="#fff" transform="translate(1,1)"/><path d="M376 445h7l-3.5 3.5z" fill="#808080"/></svg>
<svg class="a" style="left:26px;top:455px" width="346" height="16"><rect width="346" height="16" fill="url(#chk)"/></svg>
<div class="a" style="left:10px;top:455px;width:16px;height:16px;background:#c0c0c0;box-shadow:inset -1px -1px #000,inset 1px 1px #dfdfdf,inset -2px -2px #808080,inset 2px 2px #fff;"></div>
<svg class="a" style="left:0;top:0" width="628" height="500"><path d="M19 459v7l-3.5-3.5z" fill="#fff" transform="translate(1,1)"/><path d="M19 459v7l-3.5-3.5z" fill="#808080"/></svg>
<div class="a" style="left:356px;top:455px;width:16px;height:16px;background:#c0c0c0;box-shadow:inset -1px -1px #000,inset 1px 1px #dfdfdf,inset -2px -2px #808080,inset 2px 2px #fff;"></div>
<svg class="a" style="left:0;top:0" width="628" height="500"><path d="M362 459v7l3.5-3.5z" fill="#fff" transform="translate(1,1)"/><path d="M362 459v7l3.5-3.5z" fill="#808080"/></svg>
<div class="a" style="left:372px;top:455px;width:16px;height:16px;background:#c0c0c0"></div>
<div class="a" style="left:393px;top:302px;width:227px;height:21px;background:#c0c0c0;box-shadow:inset 1px 1px #808080,inset -1px -1px #fff;"></div>
<div class="t" style="left:396.59px;top:307px;transform:scaleX(0.9058);">Code Toolbox: Data</div>
<div class="a" style="left:393px;top:323px;width:227px;height:24px;background:#fff;box-shadow:inset 1px 1px #808080,inset -1px -1px #fff,inset 2px 2px #000,inset -2px -2px #dfdfdf;"></div>
<svg class="a" style="left:0;top:0" width="628" height="500"><rect x="403" y="333" width="1" height="1" fill="#808080"/><rect x="405" y="333" width="1" height="1" fill="#808080"/><rect x="407" y="333" width="1" height="1" fill="#808080"/><rect x="409" y="333" width="1" height="1" fill="#808080"/><rect x="411" y="333" width="1" height="1" fill="#808080"/><rect x="413" y="333" width="1" height="1" fill="#808080"/><rect x="415" y="327" width="14" height="12" fill="#000080"/><rect x="416" y="330" width="3" height="2" fill="#c0c0d0"/><rect x="416" y="333" width="3" height="4" fill="#fff"/><rect x="417" y="334" width="1" height="3" fill="#000080"/><rect x="420" y="330" width="3" height="2" fill="#c0c0d0"/><rect x="420" y="333" width="3" height="4" fill="#fff"/><rect x="421" y="334" width="1" height="3" fill="#000080"/><rect x="424" y="330" width="3" height="2" fill="#c0c0d0"/><rect x="424" y="333" width="3" height="4" fill="#fff"/><rect x="425" y="334" width="1" height="3" fill="#000080"/></svg>
<div class="a" style="left:433px;top:325px;width:20px;height:16px;background:#c0c0c0"></div>
<div class="t" style="left:434.41px;top:328px;transform:scaleX(0.8889);">List</div>
<div class="a" style="left:393px;top:350px;width:227px;height:21px;background:#c0c0c0;box-shadow:inset 1px 1px #808080,inset -1px -1px #fff;"></div>
<div class="t" style="left:396.73px;top:355px;transform:scaleX(0.8671);">Fields for List</div>
<div class="a" style="left:393px;top:371px;width:227px;height:81px;background:#fff;box-shadow:inset 1px 1px #808080,inset -1px -1px #fff,inset 2px 2px #000,inset -2px -2px #dfdfdf;"></div>
<div class="a" style="left:395px;top:373px;width:206px;height:19px;background:#fff"></div>
<div class="a" style="left:395px;top:373px;width:128px;height:16px;background:#c0c0c0;box-shadow:inset -1px -1px #808080,inset 1px 1px #fff"></div>
<div class="a" style="left:524px;top:373px;width:40px;height:16px;background:#c0c0c0;box-shadow:inset -1px -1px #808080,inset 1px 1px #fff"></div>
<div class="a" style="left:565px;top:373px;width:35px;height:16px;background:#c0c0c0;box-shadow:inset -1px -1px #808080,inset 1px 1px #fff"></div>
<div class="a" style="left:523px;top:373px;width:1px;height:16px;background:#808080"></div>
<div class="a" style="left:564px;top:373px;width:1px;height:16px;background:#808080"></div>
<div class="a" style="left:600px;top:373px;width:1px;height:16px;background:#808080"></div>
<div class="t" style="left:401.02px;top:376px;transform:scaleX(0.8806);">Name</div>
<div class="t" style="left:532.20px;top:376px;transform:scaleX(0.8885);">Type</div>
<div class="t" style="left:574.61px;top:376px;transform:scaleX(0.8864);">Size</div>
<div class="a" style="left:395px;top:392px;width:206px;height:16px;background:#000080"></div>
<div class="a" style="left:396px;top:393px;width:126px;height:14px;background:#c0c0c0;box-shadow:inset -1px -1px #808080,inset 1px 1px #e0e0f0"></div>
<div class="a" style="left:524px;top:408px;width:77px;height:1px;background:#c0c0c0"></div>
<div class="a" style="left:564px;top:392px;width:1px;height:16px;background:#8080c0"></div>
<div class="a" style="left:600px;top:392px;width:1px;height:16px;background:#8080c0"></div>
<div class="a" style="left:395px;top:409px;width:206px;height:17px;background:#fff"></div>
<div class="a" style="left:395px;top:409px;width:128px;height:16px;background:#c0c0c0;box-shadow:inset -1px -1px #808080,inset 1px 1px #fff"></div>
<div class="a" style="left:564px;top:409px;width:1px;height:16px;background:#c0c0c0"></div>
<div class="a" style="left:600px;top:409px;width:1px;height:16px;background:#c0c0c0"></div>
<div class="a" style="left:524px;top:425px;width:77px;height:1px;background:#c0c0c0"></div>
<div class="a" style="left:395px;top:426px;width:206px;height:17px;background:#fff"></div>
<div class="a" style="left:395px;top:426px;width:128px;height:16px;background:#c0c0c0;box-shadow:inset -1px -1px #808080,inset 1px 1px #fff"></div>
<div class="a" style="left:564px;top:426px;width:1px;height:16px;background:#c0c0c0"></div>
<div class="a" style="left:600px;top:426px;width:1px;height:16px;background:#c0c0c0"></div>
<div class="a" style="left:524px;top:442px;width:77px;height:1px;background:#c0c0c0"></div>
<div class="a" style="left:395px;top:443px;width:206px;height:17px;background:#fff"></div>
<div class="a" style="left:395px;top:443px;width:128px;height:16px;background:#c0c0c0;box-shadow:inset -1px -1px #808080,inset 1px 1px #fff"></div>
<div class="a" style="left:564px;top:443px;width:1px;height:16px;background:#c0c0c0"></div>
<div class="a" style="left:600px;top:443px;width:1px;height:16px;background:#c0c0c0"></div>
<div class="a" style="left:524px;top:459px;width:77px;height:1px;background:#c0c0c0"></div>
<svg class="a" style="left:0;top:0" width="628" height="500"><rect x="400" y="397" width="1" height="1" fill="#000"/><rect x="403" y="396" width="1" height="1" fill="#000"/><rect x="406" y="397" width="1" height="1" fill="#000"/><rect x="400" y="400" width="1" height="1" fill="#000"/><rect x="403" y="399" width="1" height="1" fill="#000"/><rect x="406" y="400" width="1" height="1" fill="#000"/><rect x="400" y="403" width="1" height="1" fill="#000"/><rect x="403" y="402" width="1" height="1" fill="#000"/><rect x="406" y="403" width="1" height="1" fill="#000"/><rect x="400" y="414" width="1" height="1" fill="#000"/><rect x="403" y="413" width="1" height="1" fill="#000"/><rect x="406" y="414" width="1" height="1" fill="#000"/><rect x="400" y="417" width="1" height="1" fill="#000"/><rect x="403" y="416" width="1" height="1" fill="#000"/><rect x="406" y="417" width="1" height="1" fill="#000"/><rect x="400" y="420" width="1" height="1" fill="#000"/><rect x="403" y="419" width="1" height="1" fill="#000"/><rect x="406" y="420" width="1" height="1" fill="#000"/><rect x="400" y="431" width="1" height="1" fill="#000"/><rect x="403" y="430" width="1" height="1" fill="#000"/><rect x="406" y="431" width="1" height="1" fill="#000"/><rect x="400" y="434" width="1" height="1" fill="#000"/><rect x="403" y="433" width="1" height="1" fill="#000"/><rect x="406" y="434" width="1" height="1" fill="#000"/><rect x="400" y="437" width="1" height="1" fill="#000"/><rect x="403" y="436" width="1" height="1" fill="#000"/><rect x="406" y="437" width="1" height="1" fill="#000"/><rect x="400" y="448" width="1" height="1" fill="#000"/><rect x="403" y="447" width="1" height="1" fill="#000"/><rect x="406" y="448" width="1" height="1" fill="#000"/><rect x="400" y="451" width="1" height="1" fill="#000"/><rect x="403" y="450" width="1" height="1" fill="#000"/><rect x="406" y="451" width="1" height="1" fill="#000"/><rect x="400" y="454" width="1" height="1" fill="#000"/><rect x="403" y="453" width="1" height="1" fill="#000"/><rect x="406" y="454" width="1" height="1" fill="#000"/></svg>
<div class="a" style="left:395px;top:392px;width:206px;height:16px;overflow:hidden"><div class="t" style="left:18.00px;top:3px;transform:scaleX(0.8833);">Additional-description</div><div class="t" style="left:129.93px;top:3px;transform:scaleX(0.8733);color:#fff">String</div><div class="t" style="left:191.00px;top:3px;transform:scaleX(0.8538);color:#fff">40</div></div>
<div class="a" style="left:395px;top:409px;width:206px;height:16px;overflow:hidden"><div class="t" style="left:18.00px;top:3px;transform:scaleX(0.8639);">Additional-idx</div><div class="t" style="left:129.90px;top:3px;transform:scaleX(0.9000);color:#000">Integer</div></div>
<div class="a" style="left:395px;top:426px;width:206px;height:16px;overflow:hidden"><div class="t" style="left:18.00px;top:3px;transform:scaleX(0.8897);">Additional-percentage</div><div class="t" style="left:129.90px;top:3px;transform:scaleX(0.9027);color:#000">Double</div></div>
<div class="a" style="left:395px;top:443px;width:206px;height:8px;overflow:hidden"><div class="t" style="left:18.00px;top:3px;transform:scaleX(0.8837);">Additional-date</div><div class="t" style="left:129.90px;top:3px;transform:scaleX(0.9000);color:#000">Integer</div></div>
<div class="a" style="left:395px;top:450px;width:223px;height:1px;background:#dfdfdf"></div>
<svg class="a" style="left:602px;top:373px" width="16" height="77"><rect width="16" height="77" fill="url(#chk)"/></svg>
<div class="a" style="left:602px;top:373px;width:16px;height:16px;background:#c0c0c0;box-shadow:inset -1px -1px #000,inset 1px 1px #dfdfdf,inset -2px -2px #808080,inset 2px 2px #fff;"></div>
<svg class="a" style="left:0;top:0" width="628" height="500"><path d="M606 383h7l-3.5-3.5z" fill="#000"/></svg>
<div class="a" style="left:602px;top:434px;width:16px;height:16px;background:#c0c0c0;box-shadow:inset -1px -1px #000,inset 1px 1px #dfdfdf,inset -2px -2px #808080,inset 2px 2px #fff;"></div>
<svg class="a" style="left:0;top:0" width="628" height="500"><path d="M606 440h7l-3.5 3.5z" fill="#000"/></svg>
<div class="a" style="left:602px;top:389px;width:16px;height:8px;background:#c0c0c0;box-shadow:inset -1px -1px #000,inset 1px 1px #dfdfdf,inset -2px -2px #808080,inset 2px 2px #fff;"></div>
<div class="a" style="left:393px;top:452px;width:227px;height:1px;background:#000"></div>
<svg class="a" style="left:393px;top:453px" width="227" height="20"><rect width="227" height="20" fill="url(#chk)"/></svg>
<svg class="a" style="left:0;top:0" width="628" height="500"><path d="M402 452.5L406.5 468.5H433.5L437.5 452.5Z" fill="#c0c0c0"/><path d="M402 452.5L406.5 468.5H433.5L437.5 452.5" fill="none" stroke="#000"/><path d="M437.5 453L434.5 465Q434.5 468.5 437.5 468.5H478.5L482.5 453Z" fill="#fff" stroke="#000"/><path d="M482.5 453L479.5 465Q479.5 468.5 482.5 468.5H534.5L538.5 453Z" fill="#fff" stroke="#000"/></svg>
<div class="t" style="left:406.56px;top:455px;transform:scaleX(0.9375);">Data</div>
<div class="t" style="left:440.00px;top:455px;transform:scaleX(0.8750);">Objects</div>
<div class="t" style="left:483.07px;top:455px;transform:scaleX(0.9288);">Language</div>
<div class="a" style="left:4px;top:479px;width:65px;height:18px;background:#c0c0c0;box-shadow:inset 1px 1px #808080,inset -1px -1px #fff;"></div>
<div class="t" style="left:43.80px;top:482px;transform:scaleX(0.8750);">4: 3</div>
<div class="a" style="left:70px;top:479px;width:554px;height:18px;background:#c0c0c0;box-shadow:inset 1px 1px #808080,inset -1px -1px #fff;"></div>
<svg class="a" style="left:0;top:0" width="628" height="500"><rect x="611" y="495" width="1" height="1" fill="#fff"/><rect x="612" y="494" width="1" height="1" fill="#fff"/><rect x="613" y="493" width="1" height="1" fill="#fff"/><rect x="614" y="492" width="1" height="1" fill="#fff"/><rect x="615" y="491" width="1" height="1" fill="#fff"/><rect x="616" y="490" width="1" height="1" fill="#fff"/><rect x="617" y="489" width="1" height="1" fill="#fff"/><rect x="618" y="488" width="1" height="1" fill="#fff"/><rect x="619" y="487" width="1" height="1" fill="#fff"/><rect x="620" y="486" width="1" height="1" fill="#fff"/><rect x="621" y="485" width="1" height="1" fill="#fff"/><rect x="622" y="484" width="1" height="1" fill="#fff"/><rect x="612" y="495" width="1" height="1" fill="#808080"/><rect x="613" y="494" width="1" height="1" fill="#808080"/><rect x="614" y="493" width="1" height="1" fill="#808080"/><rect x="615" y="492" width="1" height="1" fill="#808080"/><rect x="616" y="491" width="1" height="1" fill="#808080"/><rect x="617" y="490" width="1" height="1" fill="#808080"/><rect x="618" y="489" width="1" height="1" fill="#808080"/><rect x="619" y="488" width="1" height="1" fill="#808080"/><rect x="620" y="487" width="1" height="1" fill="#808080"/><rect x="621" y="486" width="1" height="1" fill="#808080"/><rect x="622" y="485" width="1" height="1" fill="#808080"/><rect x="613" y="495" width="1" height="1" fill="#808080"/><rect x="614" y="494" width="1" height="1" fill="#808080"/><rect x="615" y="493" width="1" height="1" fill="#808080"/><rect x="616" y="492" width="1" height="1" fill="#808080"/><rect x="617" y="491" width="1" height="1" fill="#808080"/><rect x="618" y="490" width="1" height="1" fill="#808080"/><rect x="619" y="489" width="1" height="1" fill="#808080"/><rect x="620" y="488" width="1" height="1" fill="#808080"/><rect x="621" y="487" width="1" height="1" fill="#808080"/><rect x="622" y="486" width="1" height="1" fill="#808080"/><rect x="615" y="495" width="1" height="1" fill="#fff"/><rect x="616" y="494" width="1" height="1" fill="#fff"/><rect x="617" y="493" width="1" height="1" fill="#fff"/><rect x="618" y="492" width="1" height="1" fill="#fff"/><rect x="619" y="491" width="1" height="1" fill="#fff"/><rect x="620" y="490" width="1" height="1" fill="#fff"/><rect x="621" y="489" width="1" height="1" fill="#fff"/><rect x="622" y="488" width="1" height="1" fill="#fff"/><rect x="616" y="495" width="1" height="1" fill="#808080"/><rect x="617" y="494" width="1" height="1" fill="#808080"/><rect x="618" y="493" width="1" height="1" fill="#808080"/><rect x="619" y="492" width="1" height="1" fill="#808080"/><rect x="620" y="491" width="1" height="1" fill="#808080"/><rect x="621" y="490" width="1" height="1" fill="#808080"/><rect x="622" y="489" width="1" height="1" fill="#808080"/><rect x="617" y="495" width="1" height="1" fill="#808080"/><rect x="618" y="494" width="1" height="1" fill="#808080"/><rect x="619" y="493" width="1" height="1" fill="#808080"/><rect x="620" y="492" width="1" height="1" fill="#808080"/><rect x="621" y="491" width="1" height="1" fill="#808080"/><rect x="622" y="490" width="1" height="1" fill="#808080"/><rect x="619" y="495" width="1" height="1" fill="#fff"/><rect x="620" y="494" width="1" height="1" fill="#fff"/><rect x="621" y="493" width="1" height="1" fill="#fff"/><rect x="622" y="492" width="1" height="1" fill="#fff"/><rect x="620" y="495" width="1" height="1" fill="#808080"/><rect x="621" y="494" width="1" height="1" fill="#808080"/><rect x="622" y="493" width="1" height="1" fill="#808080"/><rect x="621" y="495" width="1" height="1" fill="#808080"/><rect x="622" y="494" width="1" height="1" fill="#808080"/></svg>
</body></html>
